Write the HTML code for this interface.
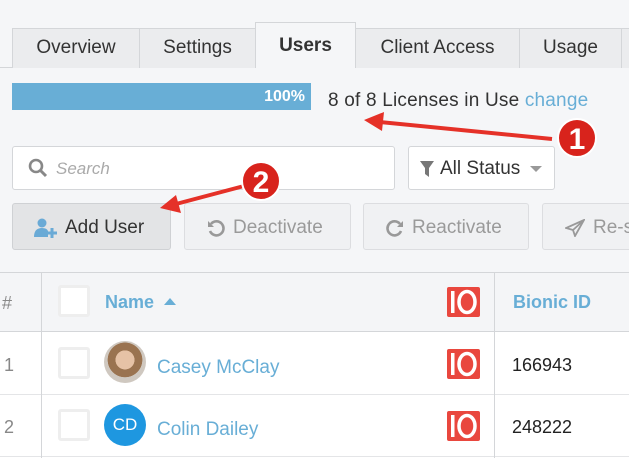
<!DOCTYPE html>
<html><head><style>
*{box-sizing:border-box;margin:0;padding:0}
body{width:629px;height:458px;overflow:hidden;background:#f5f6f8;font-family:"Liberation Sans",Arial,sans-serif;position:relative;color:#333}
.a{position:absolute}
.tab{position:absolute;top:28px;height:40px;border:1px solid #d4d6d9;border-bottom:none;background:#ebecee;font-size:19px;color:#333;text-align:center;line-height:38px}
.btn{position:absolute;top:203px;height:47px;border:1px solid #dcdde0;border-radius:3px;background:#f0f1f3;font-size:19px;color:#9a9a9a;line-height:48px}
.cb{position:absolute;width:32px;height:32px;background:#fff;border:3px solid #eeeeee;border-radius:3px}
.io{position:absolute;left:447px}
</style></head><body>
<div class="a" style="left:0;top:67px;width:629px;height:1px;background:#d4d6d9"></div>
<div class="tab" style="left:12px;width:128px">Overview</div>
<div class="tab" style="left:139px;width:117px">Settings</div>
<div class="tab" style="left:255px;width:101px;top:22px;height:46px;background:#f5f6f8;font-weight:bold;line-height:46px">Users</div>
<div class="tab" style="left:355px;width:165px">Client Access</div>
<div class="tab" style="left:519px;width:103px">Usage</div>
<div class="tab" style="left:621px;width:20px"></div>
<div class="a" style="left:12px;top:83px;width:299px;height:27px;background:#68aed6;color:#fff;font-weight:bold;font-size:16px;text-align:right;padding-right:6px;line-height:27px">100%</div>
<div class="a" style="left:328px;top:90px;font-size:19px;color:#333;letter-spacing:0.2px">8 of 8 Licenses in Use <span style="color:#68aed6">change</span></div>
<div class="a" style="left:12px;top:146px;width:383px;height:44px;background:#fff;border:1px solid #d4d6d9;border-radius:3px"></div>
<svg class="a" style="left:28px;top:158px" width="20" height="20" viewBox="0 0 20 20"><circle cx="8" cy="8" r="6" fill="none" stroke="#888" stroke-width="2.6"/><path d="M12.5 12.5L18 18" stroke="#888" stroke-width="3"/></svg>
<div class="a" style="left:56px;top:159px;font-size:17px;font-style:italic;color:#aaa">Search</div>
<div class="a" style="left:408px;top:146px;width:147px;height:44px;background:#fff;border:1px solid #d4d6d9;border-radius:3px;font-size:19px;line-height:44px;padding-left:31px;color:#333">All Status</div>
<svg class="a" style="left:420px;top:161px" width="14" height="16"><path d="M0 0H14L9 7V16L5 13V7Z" fill="#777"/></svg>
<svg class="a" style="left:530px;top:166px" width="12" height="7"><path d="M0 0H12L6 6Z" fill="#999"/></svg>
<div class="btn" style="left:12px;width:159px;background:#e3e4e6;border-color:#cfd1d4;color:#333;padding-left:52px">Add User</div>
<svg class="a" style="left:34px;top:218px" width="26" height="20"><circle cx="8" cy="5" r="4.5" fill="#6aaad6"/><path d="M0 19Q0 10 8 10Q13 10 14 13V19Z" fill="#6aaad6"/><path d="M18 10V20M13 15H23" stroke="#6aaad6" stroke-width="3"/></svg>
<div class="btn" style="left:184px;width:167px;padding-left:48px">Deactivate</div>
<svg class="a" style="left:207px;top:219px" width="18" height="18" viewBox="0 0 18 18"><path d="M4 5A7 7 0 1 1 3 12" fill="none" stroke="#999" stroke-width="2.6"/><path d="M1 2V8H7Z" fill="#999"/></svg>
<div class="btn" style="left:363px;width:166px;padding-left:48px">Reactivate</div>
<svg class="a" style="left:386px;top:219px" width="18" height="18" viewBox="0 0 18 18"><path d="M14 5A7 7 0 1 0 15 12" fill="none" stroke="#999" stroke-width="2.6"/><path d="M17 2V8H11Z" fill="#999"/></svg>
<div class="btn" style="left:542px;width:120px;padding-left:50px">Re-s</div>
<svg class="a" style="left:565px;top:219px" width="20" height="18"><path d="M19 1L1 9L8 11L10 17L19 1ZM8 11L19 1" fill="none" stroke="#999" stroke-width="1.8"/></svg>
<div class="a" style="left:0;top:272px;width:629px;height:60px;background:#f4f5f7;border-top:1px solid #d4d6d9;border-bottom:1px solid #d4d6d9"></div>
<div class="a" style="left:0;top:332px;width:629px;height:126px;background:#fff"></div>
<div class="a" style="left:0;top:394px;width:629px;height:1px;background:#e4e5e7"></div>
<div class="a" style="left:0;top:456px;width:629px;height:1px;background:#e4e5e7"></div>
<div class="a" style="left:41px;top:272px;width:1px;height:186px;background:#d4d6d9"></div>
<div class="a" style="left:494px;top:272px;width:1px;height:186px;background:#d4d6d9"></div>
<div class="a" style="left:2px;top:293px;font-size:18px;color:#888">#</div>
<div class="a" style="left:4px;top:355px;font-size:18px;color:#888">1</div>
<div class="a" style="left:4px;top:417px;font-size:18px;color:#888">2</div>
<div class="cb" style="left:58px;top:285px"></div>
<div class="cb" style="left:58px;top:347px"></div>
<div class="cb" style="left:58px;top:409px"></div>
<div class="a" style="left:105px;top:292px;font-size:18px;font-weight:bold;color:#68aed6">Name</div>
<svg class="a" style="left:164px;top:298px" width="12" height="7"><path d="M0 7H12L6 0Z" fill="#68aed6"/></svg>
<svg class="io" style="top:287px" width="33" height="30"><rect width="33" height="30" rx="2" fill="#e9473e"/><rect x="4" y="4" width="3.5" height="22" fill="#fff"/><ellipse cx="20" cy="15" rx="8" ry="10.5" fill="none" stroke="#fff" stroke-width="3.5"/></svg>
<svg class="io" style="top:349px" width="33" height="30"><rect width="33" height="30" rx="2" fill="#e9473e"/><rect x="4" y="4" width="3.5" height="22" fill="#fff"/><ellipse cx="20" cy="15" rx="8" ry="10.5" fill="none" stroke="#fff" stroke-width="3.5"/></svg>
<svg class="io" style="top:411px" width="33" height="30"><rect width="33" height="30" rx="2" fill="#e9473e"/><rect x="4" y="4" width="3.5" height="22" fill="#fff"/><ellipse cx="20" cy="15" rx="8" ry="10.5" fill="none" stroke="#fff" stroke-width="3.5"/></svg>
<div class="a" style="left:513px;top:292px;font-size:18px;font-weight:bold;color:#68aed6">Bionic ID</div>
<div class="a" style="left:104px;top:341px;width:42px;height:42px;border-radius:50%;background:radial-gradient(circle at 50% 45%,#e6c2a6 0 30%,#9a7350 31% 55%,#cfc8c0 56%)"></div>
<div class="a" style="left:104px;top:404px;width:42px;height:42px;border-radius:50%;background:#1e97e0;color:#fff;font-size:17px;text-align:center;line-height:42px">CD</div>
<div class="a" style="left:157px;top:357px;font-size:19px;color:#68aed6">Casey McClay</div>
<div class="a" style="left:157px;top:419px;font-size:19px;color:#68aed6">Colin Dailey</div>
<div class="a" style="left:512px;top:355px;font-size:18px;color:#222">166943</div>
<div class="a" style="left:512px;top:417px;font-size:18px;color:#222">248222</div>
<svg class="a" style="left:0;top:0" width="629" height="458">
<line x1="552" y1="139" x2="380" y2="122" stroke="#e53128" stroke-width="4"/>
<path d="M364 120L384 112L382 131Z" fill="#e53128"/>
<line x1="244" y1="186" x2="176" y2="204" stroke="#e53128" stroke-width="4"/>
<path d="M160 208L176 195L181 213Z" fill="#e53128"/>
<circle cx="577" cy="138" r="19" fill="#d8231c" stroke="#fff" stroke-width="2"/>
<circle cx="261" cy="181" r="19" fill="#d8231c" stroke="#fff" stroke-width="2"/>
<text x="577" y="149" font-family="Liberation Sans" font-weight="bold" font-size="30" fill="#fff" text-anchor="middle">1</text>
<text x="261" y="192" font-family="Liberation Sans" font-weight="bold" font-size="30" fill="#fff" text-anchor="middle">2</text>
</svg>
</body></html>
